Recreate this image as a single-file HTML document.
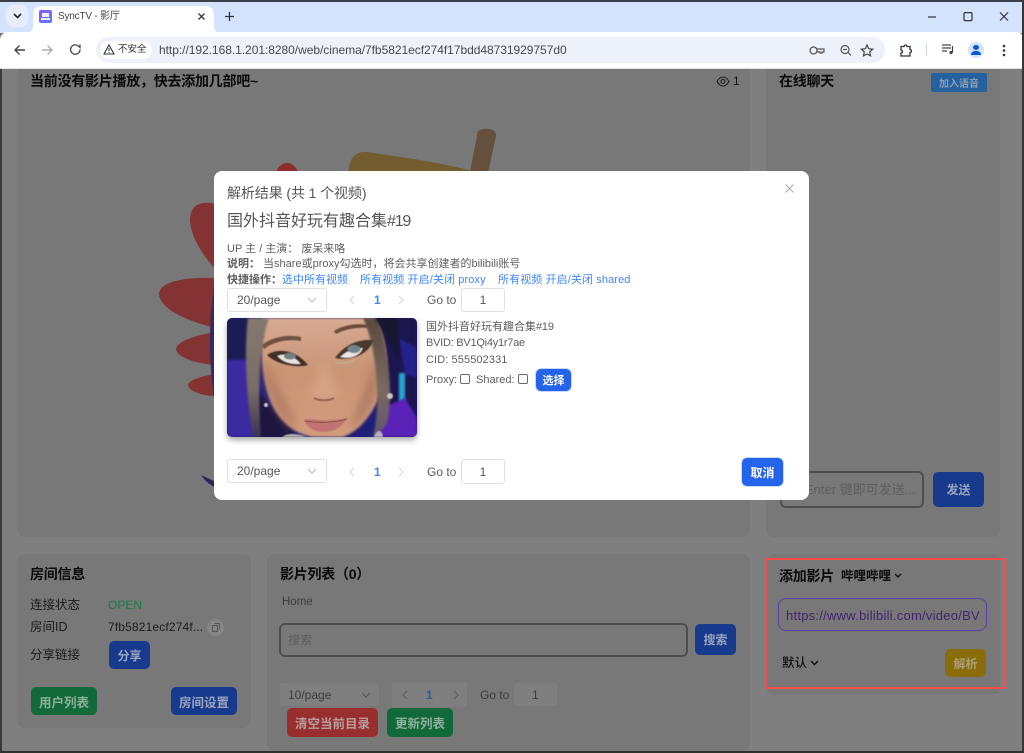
<!DOCTYPE html>
<html lang="zh"><head><meta charset="utf-8"><title>SyncTV - 影厅</title>
<style>
*{box-sizing:border-box;margin:0;padding:0}
html,body{width:1024px;height:753px;overflow:hidden;background:#7f7f7f;font-family:"Liberation Sans","Noto Sans CJK SC",sans-serif}
.a{position:absolute}
.t{position:absolute;white-space:nowrap;line-height:1}
.card{position:absolute;background:#787878;border-radius:8px}
.btn{position:absolute;display:flex;align-items:center;justify-content:center;border-radius:5px;font-weight:700;font-size:12.5px;white-space:nowrap}
.dk{color:#0a0a0a;font-weight:700;font-size:14px}
.sel{position:absolute;background:#fff;border:1px solid #e0e0e6;border-radius:3px;color:#555;font-size:12px;padding-left:9px;display:flex;align-items:center}
.box{position:absolute;background:#fff;border:1px solid #e0e0e6;border-radius:3px;color:#555;font-size:12px;display:flex;align-items:center;justify-content:center}
.m{color:#5c5e60;font-size:11px}
.l{color:#3f87f5;font-size:11px}
</style></head><body>

<!-- Chrome -->
<div class="a" style="left:0;top:0;width:1024px;height:33px;background:#d3e3fd"></div>
<div class="a" style="left:0;top:0;width:1024px;height:2px;background:#3b3f46"></div>
<div class="a" style="left:6px;top:5px;width:22px;height:22px;background:#e6eefc;border-radius:7px"></div>
<svg class="a" style="left:13px;top:13px" width="9" height="6" viewBox="0 0 9 6"><path d="M1 1l3.500 3.500L8 1" fill="none" stroke="#222" stroke-width="1.600"/></svg>
<svg class="a" style="left:25px;top:6px" width="197" height="27" viewBox="0 0 197 27"><path d="M0 27C6 27 8 24 8 20V9C8 3 11 0 17 0H180C186 0 189 3 189 9V20C189 24 191 27 197 27Z" fill="#fff"/></svg>
<div class="a" style="left:39px;top:10px;width:13px;height:13px;border-radius:2px;background:linear-gradient(135deg,#8a5cf6,#5b7cf8)"></div>
<div class="a" style="left:42px;top:13px;width:7px;height:4px;background:#fff;opacity:.9"></div>
<div class="a" style="left:41px;top:18px;width:9px;height:2px;background:#fff;opacity:.9"></div>
<div class="t" style="left:58px;top:12px;font-size:10px;color:#444;letter-spacing:-.2px">SyncTV - 影厅</div>
<svg class="a" style="left:197px;top:12px" width="9" height="9" viewBox="0 0 9 9"><path d="M1.500 1.500l6 6M7.500 1.500l-6 6" stroke="#333" stroke-width="1.300"/></svg>
<svg class="a" style="left:224px;top:11px" width="11" height="11" viewBox="0 0 11 11"><path d="M5.500 1v9M1 5.500h9" stroke="#333" stroke-width="1.300"/></svg>
<svg class="a" style="left:928px;top:12px" width="90" height="12" viewBox="0 0 90 12"><path d="M0 5h8" stroke="#333" stroke-width="1.200"/><rect x="36" y="0.600" width="8" height="8" rx="1" fill="none" stroke="#333" stroke-width="1.200"/><path d="M72 .5l8 8M80 .5l-8 8" stroke="#333" stroke-width="1.200"/></svg>

<div class="a" style="left:0;top:32px;width:1024px;height:37px;background:#fff;border-radius:8px 8px 0 0"></div>
<div class="a" style="left:33px;top:30px;width:181px;height:6px;background:#fff"></div>
<svg class="a" style="left:13px;top:43px" width="14" height="14" viewBox="0 0 14 14"><path d="M12 7H2.500M6.500 2.500L2 7l4.500 4.500" fill="none" stroke="#444" stroke-width="1.400"/></svg>
<svg class="a" style="left:40px;top:43px" width="14" height="14" viewBox="0 0 14 14"><path d="M2 7h9.500M7.500 2.500L12 7l-4.500 4.500" fill="none" stroke="#aaa" stroke-width="1.400"/></svg>
<svg class="a" style="left:69px;top:43px" width="13" height="13" viewBox="0 0 13 13"><path d="M11 6.500a4.700 4.700 0 1 1-1.400-3.300L11 4.500V1.500" fill="none" stroke="#444" stroke-width="1.300"/></svg>
<div class="a" style="left:96px;top:37px;width:789px;height:26px;background:#edf2fa;border-radius:13px"></div>
<div class="a" style="left:100px;top:41px;width:52px;height:18px;background:#fff;border-radius:9px"></div>
<svg class="a" style="left:103px;top:44px" width="12" height="11" viewBox="0 0 12 11"><path d="M6 1L11 10H1z" fill="none" stroke="#333" stroke-width="1.100"/><path d="M6 4v3M6 8v1" stroke="#333"/></svg>
<div class="t" style="left:118px;top:45px;font-size:9.500px;color:#333">不安全</div>
<div class="t" style="left:159px;top:44px;font-size:12px;color:#47494d;letter-spacing:-.04px">http://192.168.1.201:8280/web/cinema/7fb5821ecf274f17bdd48731929757d0</div>
<svg class="a" style="left:809px;top:44px" width="70" height="14" viewBox="0 0 70 14"><circle cx="4.500" cy="6.500" r="3.500" fill="none" stroke="#555" stroke-width="1.300"/><path d="M8 5h7v3h-2v1h-2V8H8" fill="none" stroke="#555" stroke-width="1.200"/><circle cx="36" cy="5.500" r="4" fill="none" stroke="#555" stroke-width="1.200"/><path d="M39 8.500l3 3M34 5.500h4" stroke="#555" stroke-width="1.200"/><path d="M58 1l1.700 3.700 4 .5-3 2.700.8 4L58 10l-3.500 1.900.8-4-3-2.700 4-.5z" fill="none" stroke="#444" stroke-width="1.200"/></svg>
<svg class="a" style="left:899px;top:43px" width="15" height="15" viewBox="0 0 15 15"><path d="M2 3.500h3a1.500 1.500 0 0 1 3 0h3v3a1.500 1.500 0 0 1 0 3v3.500H2v-3a1.500 1.500 0 0 0 0-3z" fill="none" stroke="#333" stroke-width="1.300"/></svg>
<div class="a" style="left:926px;top:44px;width:1px;height:12px;background:#c9d7ee"></div>
<svg class="a" style="left:942px;top:44px" width="13" height="11" viewBox="0 0 13 11"><path d="M0 1h9M0 4h9M0 7h5" stroke="#444" stroke-width="1.200"/><path d="M10.500 2v6.500" stroke="#444" stroke-width="1.200"/><circle cx="9" cy="8.500" r="1.600" fill="#444"/></svg>
<div class="a" style="left:968px;top:42px;width:16px;height:16px;border-radius:50%;background:#d3e3fd"></div>
<div class="a" style="left:973px;top:45px;width:6px;height:5px;border-radius:50%;background:#0b57d0"></div>
<div class="a" style="left:971px;top:51px;width:10px;height:4px;border-radius:4px 4px 0 0;background:#0b57d0"></div>
<svg class="a" style="left:1002px;top:44px" width="4" height="13" viewBox="0 0 4 13"><circle cx="2" cy="2" r="1.300" fill="#333"/><circle cx="2" cy="6.500" r="1.300" fill="#333"/><circle cx="2" cy="11" r="1.300" fill="#333"/></svg>
<div class="a" style="left:0;top:68px;width:1024px;height:1px;background:#dfe3e8"></div>

<!-- Page under overlay -->
<div class="a" style="left:0;top:69px;width:2px;height:684px;background:#3a3a3a"></div>
<div class="a" style="left:1022px;top:0;width:2px;height:753px;background:#34373a"></div>
<div class="a" style="left:0;top:751px;width:1024px;height:2px;background:#2e3330"></div>

<div class="card" style="left:17px;top:69px;width:733px;height:468px;border-radius:0 0 8px 8px"></div>
<div class="card" style="left:766px;top:69px;width:234px;height:468px;border-radius:0 0 8px 8px"></div>
<div class="card" style="left:17px;top:554px;width:234px;height:174px"></div>
<div class="card" style="left:267px;top:554px;width:483px;height:197px"></div>
<div class="card" style="left:766px;top:554px;width:234px;height:141px"></div>

<svg class="a" style="left:0;top:69px" width="760" height="470" viewBox="0 69 760 470">
<path d="M349 180C347 160 354 151 367 152C400 157 440 162 472 171L480 190L350 190Z" fill="#735c2f"/>
<path d="M470 172L478 131C484 127 497 128 496 136L488 173Z" fill="#64503c"/>
<ellipse cx="287" cy="178" rx="12" ry="15" fill="#8d2d2c"/>
<path d="M216 204C200 200 189 206 190 222C192 240 205 258 216 270Z" fill="#823332"/>
<path d="M216 278C190 277 160 280 159 294C160 310 190 322 216 328Z" fill="#823332"/>
<path d="M216 332C195 335 176 342 176 349C177 358 198 364 216 365Z" fill="#823332"/>
<path d="M216 374C200 376 188 381 188 385C189 392 204 396 216 396Z" fill="#823332"/>
<path d="M216 280C208 310 208 370 216 410Z" fill="#352a63"/>
<path d="M201 475L216 482L216 488C210 485 205 481 201 475Z" fill="#2f2460"/>
</svg>

<div class="t dk" style="left:30px;top:74px;letter-spacing:-.25px">当前没有影片播放，快去添加几部吧~</div>
<svg class="a" style="left:716px;top:76px" width="14" height="12" viewBox="0 0 14 12"><path d="M1 5.500C3 2 5 1 7 1s4 1 6 4.500C11 9 9 10 7 10S3 9 1 5.500z" fill="none" stroke="#1d1d1d" stroke-width="1.100"/><circle cx="7" cy="5.500" r="2" fill="none" stroke="#1d1d1d" stroke-width="1.100"/></svg>
<div class="t" style="left:733px;top:75px;font-size:12px;color:#111">1</div>
<div class="t dk" style="left:779px;top:74px;letter-spacing:-.25px">在线聊天</div>
<div class="btn" style="left:931px;top:73px;width:56px;height:19px;background:#25619e;color:#8f9db0;font-size:10px;border-radius:2px">加入语音</div>

<div class="a" style="left:780px;top:471px;width:144px;height:37px;border:2px solid #4e4e4e;border-radius:6px"></div>
<div class="t" style="left:805px;top:483px;font-size:13px;color:#5e5e5e">Enter 键即可发送...</div>
<div class="btn" style="left:933px;top:472px;width:51px;height:35px;background:#183a8c;color:#9aa5bd;font-size:12px">发送</div>

<div class="t dk" style="left:30px;top:567px;letter-spacing:-.25px">房间信息</div>
<div class="t" style="left:30px;top:599px;font-size:12.500px;color:#1c1c1c">连接状态</div>
<div class="t" style="left:108px;top:599px;font-size:12px;color:#1f7a45">OPEN</div>
<div class="t" style="left:30px;top:621px;font-size:12.500px;color:#1c1c1c">房间ID</div>
<div class="t" style="left:108px;top:621px;font-size:12px;color:#1c1c1c;letter-spacing:.15px">7fb5821ecf274f...</div>
<div class="a" style="left:207px;top:619px;width:17px;height:17px;border-radius:50%;background:#858585"></div>
<svg class="a" style="left:212px;top:623px" width="8" height="9" viewBox="0 0 8 9"><path d="M2.500 .5h5v6M.5 2.500h5v6h-5z" fill="none" stroke="#555" stroke-width=".9"/></svg>
<div class="t" style="left:30px;top:649px;font-size:12.500px;color:#1c1c1c">分享链接</div>
<div class="btn" style="left:109px;top:641px;width:41px;height:28px;background:#183a8c;color:#9aa5bd;font-size:12px">分享</div>
<div class="btn" style="left:31px;top:687px;width:66px;height:28px;background:#12693a;color:#8fb09c">用户列表</div>
<div class="btn" style="left:171px;top:687px;width:66px;height:28px;background:#183a8c;color:#9aa5bd">房间设置</div>

<div class="t dk" style="left:280px;top:567px;letter-spacing:-.25px">影片列表（0）</div>
<div class="t" style="left:282px;top:597px;font-size:11.500px;color:#3d3d3d">Home</div>
<div class="a" style="left:279px;top:623px;width:409px;height:34px;border:2px solid #4e4e4e;border-radius:6px"></div>
<div class="t" style="left:288px;top:634px;font-size:12px;color:#5e5e5e">搜索</div>
<div class="btn" style="left:695px;top:624px;width:41px;height:31px;background:#183a8c;color:#9aa5bd;font-size:12px">搜索</div>
<div class="a" style="left:280px;top:683px;width:99px;height:23px;background:#7f7f7f;border-radius:3px"></div>
<div class="t" style="left:288px;top:689px;font-size:12px;color:#3d3d3d">10/page</div>
<svg class="a" style="left:361px;top:692px" width="10" height="6" viewBox="0 0 10 6"><path d="M1 1l4 4 4-4" fill="none" stroke="#555"/></svg>
<div class="a" style="left:392px;top:682px;width:75px;height:25px;background:#7f7f7f;border-radius:3px"></div>
<svg class="a" style="left:402px;top:690px" width="60" height="10" viewBox="0 0 60 10"><path d="M5 1L1 5l4 4" fill="none" stroke="#5d5d5d"/><path d="M52 1l4 4-4 4" fill="none" stroke="#5d5d5d"/></svg>
<div class="t" style="left:426px;top:689px;font-size:12px;font-weight:700;color:#265f9e">1</div>
<div class="t" style="left:480px;top:689px;font-size:12px;color:#3d3d3d">Go to</div>
<div class="a" style="left:514px;top:683px;width:43px;height:23px;background:#7f7f7f;border-radius:3px"></div>
<div class="t" style="left:532px;top:689px;font-size:12px;color:#3d3d3d">1</div>
<div class="btn" style="left:287px;top:708px;width:91px;height:29px;background:#982e2e;color:#b89d9d">清空当前目录</div>
<div class="btn" style="left:387px;top:708px;width:66px;height:29px;background:#12693a;color:#8fb09c">更新列表</div>

<div class="t dk" style="left:779px;top:569px;letter-spacing:-.25px">添加影片</div>
<div class="t dk" style="left:841px;top:570px;font-size:12.500px">哔哩哔哩</div>
<svg class="a" style="left:894px;top:573px" width="8" height="6" viewBox="0 0 8 6"><path d="M1 1l3 3 3-3" fill="none" stroke="#111" stroke-width="1.500"/></svg>
<div class="a" style="left:778px;top:598px;width:209px;height:33px;border:1.500px solid #5b3fa8;border-radius:8px"></div>
<div class="t" style="left:786px;top:609px;font-size:13px;color:#43256f;letter-spacing:.25px">https://www.bilibili.com/video/BV</div>
<div class="t" style="left:782px;top:657px;font-size:12.500px;color:#111;font-weight:500">默认</div>
<svg class="a" style="left:810px;top:660px" width="9" height="6" viewBox="0 0 9 6"><path d="M1 1l3.500 3.500L8 1" fill="none" stroke="#111" stroke-width="1.500"/></svg>
<div class="btn" style="left:945px;top:649px;width:41px;height:28px;background:#8a6d0a;color:#ab9f74;font-size:12px">解析</div>
<div class="a" style="left:765px;top:558px;width:240px;height:131px;border:2px solid #ff4b4b"></div>

<!-- Modal -->
<div class="a" style="left:214px;top:171px;width:595px;height:329px;background:#fff;border-radius:8px"></div>
<div class="t" style="left:227px;top:186px;font-size:14px;color:#555;letter-spacing:-.1px">解析结果 (共 1 个视频)</div>
<svg class="a" style="left:785px;top:184px" width="9" height="9" viewBox="0 0 9 9"><path d="M.5.5l8 8M8.500.5l-8 8" stroke="#aaa"/></svg>
<div class="t" style="left:227px;top:214px;font-size:16px;color:#555">国外抖音好玩有趣合集<span style="letter-spacing:-1.200px">#19</span></div>
<div class="t m" style="left:227px;top:244px">UP 主 / 主演： 废呆来咯</div>
<div class="t m" style="left:227px;top:259px"><b>说明：</b> 当share或proxy勾选时，将会共享创建者的bilibili账号</div>
<div class="t m" style="left:227px;top:275px"><b>快捷操作：</b></div>
<div class="t l" style="left:282px;top:275px">选中所有视频</div>
<div class="t l" style="left:360px;top:275px;letter-spacing:.1px">所有视频 开启/关闭 proxy</div>
<div class="t l" style="left:498px;top:275px;letter-spacing:.1px">所有视频 开启/关闭 shared</div>

<div class="sel" style="left:227px;top:288px;width:100px;height:24px">20/page</div>
<svg class="a" style="left:307px;top:297px" width="10" height="6" viewBox="0 0 10 6"><path d="M1 1l4 4 4-4" fill="none" stroke="#bbb"/></svg>
<svg class="a" style="left:349px;top:295px" width="58" height="10" viewBox="0 0 58 10"><path d="M5 1L1 5l4 4" fill="none" stroke="#d4d4d4"/><path d="M50 1l4 4-4 4" fill="none" stroke="#d4d4d4"/></svg>
<div class="t" style="left:374px;top:294px;font-size:12px;font-weight:700;color:#3f87f5">1</div>
<div class="t" style="left:427px;top:294px;font-size:12px;color:#5c5e60">Go to</div>
<div class="box" style="left:461px;top:288px;width:44px;height:24px">1</div>

<svg class="a" style="left:227px;top:318px;border-radius:5px;box-shadow:0 3px 6px rgba(0,0,0,.35)" width="190" height="119" viewBox="0 0 190 119">
<defs>
<filter id="b1" x="-20%" y="-20%" width="140%" height="140%"><feGaussianBlur stdDeviation="1"/></filter>
<filter id="b0" x="-20%" y="-40%" width="140%" height="180%"><feGaussianBlur stdDeviation=".6"/></filter>
<filter id="b2" x="-30%" y="-30%" width="160%" height="160%"><feGaussianBlur stdDeviation="5"/></filter>
<linearGradient id="sk" x1="0" y1="0" x2="0" y2="1"><stop offset="0" stop-color="#d8ab94"/><stop offset=".45" stop-color="#c99475"/><stop offset="1" stop-color="#d39c7f"/></linearGradient>
<linearGradient id="hl" x1="0" y1="0" x2="0" y2="1"><stop offset="0" stop-color="#85786f"/><stop offset=".6" stop-color="#7a6c66"/><stop offset="1" stop-color="#3c3358"/></linearGradient>
<linearGradient id="hr" x1="0" y1="0" x2="0" y2="1"><stop offset="0" stop-color="#5a4a42"/><stop offset=".6" stop-color="#7a6a60"/><stop offset="1" stop-color="#5f5570"/></linearGradient>
</defs>
<rect width="190" height="119" fill="#1f1e78"/>
<rect x="0" y="0" width="28" height="42" fill="#1d1d55" filter="url(#b1)"/>
<rect x="0" y="42" width="28" height="77" fill="#3a2aa0" filter="url(#b1)"/>
<rect x="150" y="0" width="40" height="119" fill="#1a1850" filter="url(#b1)"/>
<path d="M172 20L190 30V60L178 56Z" fill="#23238a" filter="url(#b1)"/>
<rect x="172" y="55" width="6" height="30" fill="#28a5d2" filter="url(#b1)"/>
<path d="M160 88L178 80L190 100V119H152Z" fill="#5a22b8" filter="url(#b1)"/>
<path d="M28 70L70 119H28Z" fill="#1a1540" filter="url(#b1)"/>
<path d="M36 0C33 25 33 55 43 82C50 100 65 116 86 119L116 119C135 112 148 92 156 70C163 50 160 20 148 0Z" fill="url(#sk)" filter="url(#b1)"/>
<path d="M36 40C36 70 48 98 72 115L60 85C50 70 44 55 36 40Z" fill="#a4705a" opacity=".7" filter="url(#b2)"/>
<path d="M150 40C152 70 140 98 122 113L135 85C142 70 146 55 150 40Z" fill="#8e604c" opacity=".8" filter="url(#b2)"/>
<path d="M21 0H42C33 25 30 75 34 119H26C19 80 17 30 21 0Z" fill="url(#hl)" filter="url(#b1)"/>
<path d="M136 0H150C163 30 166 85 160 105L150 119H146C154 85 150 30 136 0Z" fill="url(#hr)" filter="url(#b1)"/>
<path d="M148 0H170L172 42C165 25 156 12 148 0Z" fill="#18162f" filter="url(#b1)"/>
<path d="M35 27C45 19 60 16 74 19L74 23C60 21 48 23 37 31Z" fill="#705140" filter="url(#b0)"/>
<path d="M107 13C116 7 130 5 142 7L142 10C130 9 118 11 109 16Z" fill="#6a4b3a" filter="url(#b0)"/>
<path d="M40 37C50 30 68 31 81 47C70 50 50 47 40 37Z" fill="#3f2e26" filter="url(#b0)"/>
<path d="M50 38C56 35 66 36 74 46C66 47 56 45 50 38Z" fill="#e9e2dc" filter="url(#b0)"/>
<ellipse cx="63" cy="38" rx="6" ry="3.500" fill="#72807d" filter="url(#b0)"/>
<path d="M108 40C118 26 132 21 146 22C144 34 126 44 108 40Z" fill="#4a382e" filter="url(#b0)"/>
<path d="M113 39C120 32 128 30 136 30C134 37 124 42 113 39Z" fill="#ece6e2" filter="url(#b0)"/>
<ellipse cx="127" cy="31" rx="6.500" ry="4" fill="#71838a" filter="url(#b0)"/>
<path d="M108 44C114 46 122 45 128 42" fill="none" stroke="#b8b8a0" stroke-width="1" filter="url(#b0)"/>
<path d="M82 76C90 84 106 84 112 76C108 66 104 58 102 44L92 44C92 58 88 68 82 76Z" fill="#deab8f" opacity=".6" filter="url(#b2)"/>
<path d="M87 80C92 83 102 83 107 80" fill="none" stroke="#8d5a46" stroke-width="1.800" filter="url(#b0)"/>
<path d="M77 102C85 100 92 103 97 102C103 103 112 101 120 100C115 110 105 114 97 114C88 114 80 110 77 102Z" fill="#c0736f" filter="url(#b0)"/>
<path d="M78 103C90 105 108 105 120 101" fill="none" stroke="#7d4842" stroke-width=".8"/>
<circle cx="39" cy="87" r="2" fill="#ccc" filter="url(#b0)"/>
<circle cx="163" cy="78" r="3" fill="#cfc4bb" filter="url(#b0)"/>
<path d="M55 119C60 115 70 115 80 119Z" fill="#b8b0b0" filter="url(#b0)"/>
<path d="M147 119C149 112 155 110 156 119Z" fill="#b8aec0" filter="url(#b0)"/>
</svg>

<div class="t m" style="left:426px;top:322px">国外抖音好玩有趣合集<span style="letter-spacing:-.2px">#19</span></div>
<div class="t m" style="left:426px;top:338px;letter-spacing:-.25px">BVID: BV1Qi4y1r7ae</div>
<div class="t m" style="left:426px;top:355px;letter-spacing:.1px">CID: 555502331</div>
<div class="t m" style="left:426px;top:375px">Proxy:</div>
<div class="a" style="left:460px;top:374px;width:10px;height:10px;border:1px solid #6b6b6b;border-radius:2px"></div>
<div class="t m" style="left:476px;top:375px">Shared:</div>
<div class="a" style="left:518px;top:374px;width:10px;height:10px;border:1px solid #6b6b6b;border-radius:2px"></div>
<div class="btn" style="left:536px;top:369px;width:35px;height:22px;background:#2563eb;color:#fff;font-size:11px;box-shadow:0 0 0 1px #c8d8fb">选择</div>

<div class="sel" style="left:227px;top:459px;width:100px;height:24px">20/page</div>
<svg class="a" style="left:307px;top:468px" width="10" height="6" viewBox="0 0 10 6"><path d="M1 1l4 4 4-4" fill="none" stroke="#bbb"/></svg>
<svg class="a" style="left:349px;top:467px" width="58" height="10" viewBox="0 0 58 10"><path d="M5 1L1 5l4 4" fill="none" stroke="#d4d4d4"/><path d="M50 1l4 4-4 4" fill="none" stroke="#d4d4d4"/></svg>
<div class="t" style="left:374px;top:466px;font-size:12px;font-weight:700;color:#3f87f5">1</div>
<div class="t" style="left:427px;top:466px;font-size:12px;color:#5c5e60">Go to</div>
<div class="box" style="left:461px;top:459px;width:44px;height:25px">1</div>
<div class="btn" style="left:742px;top:458px;width:41px;height:28px;background:#2563eb;color:#fff;font-size:12px;box-shadow:0 0 0 1px #c8d8fb">取消</div>

</body></html>
